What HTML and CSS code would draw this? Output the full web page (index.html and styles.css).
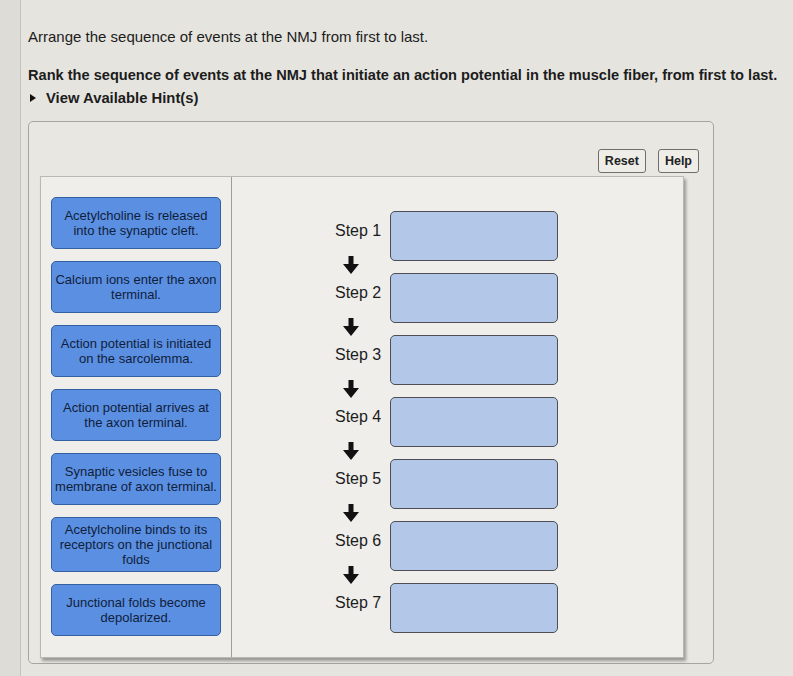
FILE: index.html
```html
<!DOCTYPE html>
<html lang="en">
<head>
    <meta charset="UTF-8">
    <title>Sequence of events at the NMJ</title>
    <link rel="stylesheet" href="styles.css">
</head>
<body>
    <div class="page">
        <p class="prompt">Arrange the sequence of events at the NMJ from first to last.</p>
        <p class="question">Rank the sequence of events at the NMJ that initiate an action potential in the muscle fiber, from first to last.</p>
        <div class="hints"><span class="caret"></span>View Available Hint(s)</div>

        <div class="panel">
            <div class="toolbar">
                <button class="btn">Reset</button>
                <button class="btn">Help</button>
            </div>

            <div class="workspace">
                <!-- items to drag -->
                <div class="bank">
                    <div class="card">Acetylcholine is released into the synaptic cleft.</div>
                    <div class="card">Calcium ions enter the axon terminal.</div>
                    <div class="card">Action potential is initiated on the sarcolemma.</div>
                    <div class="card">Action potential arrives at the axon terminal.</div>
                    <div class="card">Synaptic vesicles fuse to membrane of axon terminal.</div>
                    <div class="card">Acetylcholine binds to its receptors on the junctional folds</div>
                    <div class="card">Junctional folds become depolarized.</div>
                </div>

                <!-- drop targets -->
                <div class="steps">
                    <div class="step"><span class="label">Step 1</span><div class="slot"></div></div>
                    <div class="arrow"><svg width="16" height="18" viewBox="0 0 16 18"><polygon points="5.5,0 10.5,0 10.5,8 16,8 8,18 0,8 5.5,8" fill="#111"/></svg></div>
                    <div class="step"><span class="label">Step 2</span><div class="slot"></div></div>
                    <div class="arrow"><svg width="16" height="18" viewBox="0 0 16 18"><polygon points="5.5,0 10.5,0 10.5,8 16,8 8,18 0,8 5.5,8" fill="#111"/></svg></div>
                    <div class="step"><span class="label">Step 3</span><div class="slot"></div></div>
                    <div class="arrow"><svg width="16" height="18" viewBox="0 0 16 18"><polygon points="5.5,0 10.5,0 10.5,8 16,8 8,18 0,8 5.5,8" fill="#111"/></svg></div>
                    <div class="step"><span class="label">Step 4</span><div class="slot"></div></div>
                    <div class="arrow"><svg width="16" height="18" viewBox="0 0 16 18"><polygon points="5.5,0 10.5,0 10.5,8 16,8 8,18 0,8 5.5,8" fill="#111"/></svg></div>
                    <div class="step"><span class="label">Step 5</span><div class="slot"></div></div>
                    <div class="arrow"><svg width="16" height="18" viewBox="0 0 16 18"><polygon points="5.5,0 10.5,0 10.5,8 16,8 8,18 0,8 5.5,8" fill="#111"/></svg></div>
                    <div class="step"><span class="label">Step 6</span><div class="slot"></div></div>
                    <div class="arrow"><svg width="16" height="18" viewBox="0 0 16 18"><polygon points="5.5,0 10.5,0 10.5,8 16,8 8,18 0,8 5.5,8" fill="#111"/></svg></div>
                    <div class="step"><span class="label">Step 7</span><div class="slot"></div></div>
                </div>
            </div>
        </div>
    </div>
</body>
</html>
```

FILE: styles.css
```css
body {
    margin: 0;
    background: #dedcd6;
    font-family: "Liberation Sans", Arial, sans-serif;
    color: #1c1c1c;
}

.page {
    margin-left: 20px;
    border-left: 1px solid #c4c3bd;
    background: #e5e4df;
    padding: 29px 0 0 7px;
    height: 647px;
}

.prompt {
    margin: 0;
    font-size: 15px;
    line-height: 16px;
}

.question {
    margin: 22px 0 0;
    font-size: 14.6px;
    font-weight: bold;
    line-height: 16px;
}

.hints {
    margin-top: 7px;
    font-size: 14.8px;
    font-weight: bold;
    line-height: 16px;
    display: flex;
    align-items: center;
}

.caret {
    width: 0;
    height: 0;
    border-top: 4px solid transparent;
    border-bottom: 4px solid transparent;
    border-left: 6px solid #111;
    margin: 0 10px 0 2px;
}

/* outer box */
.panel {
    margin-top: 15px;
    width: 686px;
    height: 543px;
    border: 1px solid #a6a59f;
    border-radius: 5px;
    background: #e8e7e2;
    padding: 0 0 0 11px;
    box-sizing: border-box;
}

.toolbar {
    display: flex;
    justify-content: flex-end;
    gap: 12px;
    padding: 27px 14px 0 0;
    height: 54px;
    box-sizing: border-box;
}

.btn {
    font-family: inherit;
    font-size: 12.5px;
    font-weight: bold;
    color: #222;
    background: #eeede8;
    border: 1px solid #6f6e6a;
    border-radius: 3px;
    height: 24px;
    padding: 0 6px;
}

.workspace {
    display: flex;
    width: 642px;
    height: 480px;
    background: #efeeea;
    border: 1px solid #b9b8b2;
    box-shadow: 2px 3px 3px rgba(0, 0, 0, 0.35);
}

.bank {
    width: 191px;
    border-right: 1px solid #9e9d98;
    padding: 20px 0 0 10px;
    box-sizing: border-box;
    display: flex;
    flex-direction: column;
    gap: 12px;
}

.card {
    width: 170px;
    min-height: 52px;
    box-sizing: border-box;
    padding: 4px 2px;
    display: flex;
    align-items: center;
    justify-content: center;
    text-align: center;
    font-size: 13px;
    line-height: 15px;
    color: #0f1e3a;
    background: #5b8fe2;
    border: 1px solid #34609f;
    border-radius: 5px;
}

.steps {
    padding: 34px 0 0 103px;
    display: flex;
    flex-direction: column;
}

.step {
    display: flex;
    align-items: center;
}

.label {
    width: 55px;
    font-size: 16px;
    margin-top: -10px;
}

.slot {
    width: 168px;
    height: 50px;
    box-sizing: border-box;
    background: #b3c8e8;
    border: 1px solid #4d4f55;
    border-radius: 5px;
}

.arrow {
    height: 12px;
    padding-left: 8px;
}

.arrow svg {
    display: block;
    margin-top: -5px;
}
```
